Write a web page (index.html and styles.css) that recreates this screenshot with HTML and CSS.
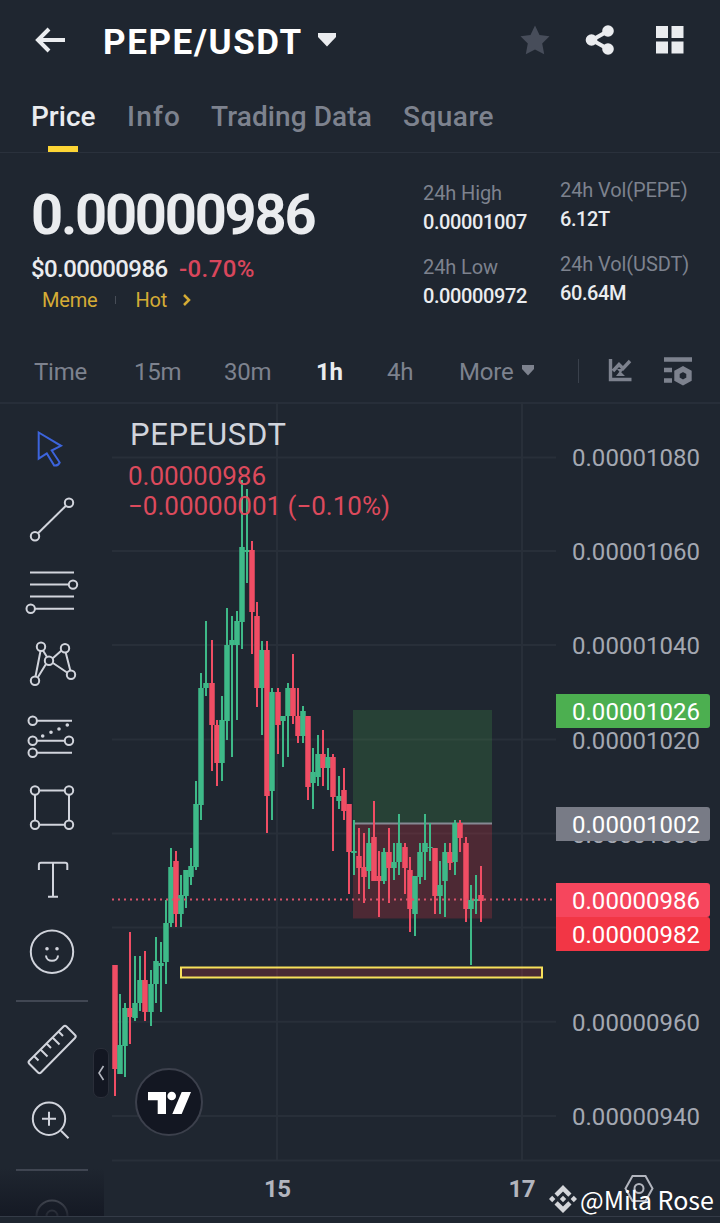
FILE: index.html
```html
<!DOCTYPE html>
<html lang="en">
<head>
  <meta charset="UTF-8" />
  <meta name="viewport" content="width=device-width, initial-scale=1.0"/>
  <title>PEPE/USDT</title>
  <link rel="stylesheet" href="styles.css">
</head>
<body>

  <header class="topbar">
    <svg class="back" width="32" height="28" viewBox="0 0 32 28"><path d="M31 14H4M15 3L4 14l11 11" /></svg>
    <h1>PEPE/USDT</h1>
    <svg class="caret" width="20" height="16" viewBox="0 0 20 16"><path d="M1 1h18v4l-9 9.500L1 5z" /></svg>
    <div class="actions">
      <svg width="32" height="34" viewBox="0 0 32 34"><path class="star" d="M16 2.500l4.500 9.500 10 1.200-7.300 7.300 2 10.800L16 26.500 6.800 31.300l2-10.800L1.500 13.200l10-1.200z" /></svg>
      <svg width="32" height="34" viewBox="0 0 32 34" class="share"><path d="M24 8L8 17l16 9" /><circle cx="24" cy="8" r="5.800" /><circle cx="7.500" cy="17" r="5.800" /><circle cx="24" cy="26" r="5.800" /></svg>
      <svg width="28" height="28" viewBox="0 0 28 28" class="apps"><path d="M0 0h12v12H0zM15.500 0h12v12h-12zM0 15.500h12v12H0zM15.500 15.500h12v12h-12z" /></svg>
    </div>
  </header>

  <nav class="tabs">
    <a class="tab active">Price</a>
    <a class="tab info">Info</a>
    <a class="tab data">Trading Data</a>
    <a class="tab square">Square</a>
  </nav>

  <section class="ticker">
    <div class="last">
      <div class="last-price">0.00000986</div>
      <div class="fiat"><span class="usd">$0.00000986</span><span class="change">-0.70%</span></div>
      <div class="tags">
        <span>Meme</span><i></i><span>Hot</span>
        <svg width="10" height="14" viewBox="0 0 10 14"><path d="M2 2l5 5-5 5" /></svg>
      </div>
    </div>
    <dl class="stats high-low">
      <dt>24h High</dt><dd>0.00001007</dd>
      <dt>24h Low</dt><dd>0.00000972</dd>
    </dl>
    <dl class="stats volume">
      <dt>24h Vol(PEPE)</dt><dd>6.12T</dd>
      <dt>24h Vol(USDT)</dt><dd>60.64M</dd>
    </dl>
  </section>

  <div class="intervals">
    <span class="i-time">Time</span>
    <span class="i-15">15m</span>
    <span class="i-30">30m</span>
    <span class="i-1 active">1h</span>
    <span class="i-4">4h</span>
    <span class="i-more">More</span>
    <svg class="more-caret" width="14" height="13" viewBox="0 0 14 13"><path d="M1 0h12v4l-6 6.500L1 4z" /></svg>
    <i class="divider"></i>
    <svg class="indicator" width="24" height="26" viewBox="0 0 24 26"><path class="line" d="M2.500 1v20.500H23.500M5 13l6-6.500 4 4 7-7.500" stroke-width="3.400" /><path class="fill" d="M8 18l4-5 5 5zM9 11h7l-3.500 4z" /></svg>
    <svg class="settings" width="30" height="30" viewBox="0 0 30 30"><path class="line" d="M1 3.500h28M1 14h8M1 24.500h8" stroke-width="4.500" /><path class="line" d="M20 13l6 3.400v6.700L20 26.500l-6-3.400v-6.700z" stroke-width="5.400" /></svg>
  </div>

  <main class="chart">
    <aside class="tools">
      <svg class="cursor" viewBox="0 0 72 72"><path d="M22.700 20.500L45 33.800l-9.300 4.700 8 12q-1.500 3.500-5.500 3l-7.400-12.100-8.100 5.300z" /></svg>
      <svg viewBox="0 0 72 72"><path d="M22 49.300L50 21.700" /><circle cx="19" cy="52.300" r="4.200" /><circle cx="53" cy="18.700" r="4.200" /></svg>
      <svg viewBox="0 0 72 72"><path d="M14 16.500h44M14 28.500h39M14 40.600h44M19 52.700h39" /><circle cx="57" cy="28.600" r="4.200" /><circle cx="14.700" cy="52.700" r="4.200" /></svg>
      <svg viewBox="0 0 72 72"><path d="M24.500 23l-5 25.500M27 22.500l4 6.500M30 36l-8 13M36.500 30.500l9-8M37 35l14 9.500M49.700 24.500l4.600 18" /><circle cx="25" cy="18.700" r="4.200" /><circle cx="49" cy="20.300" r="4.200" /><circle cx="33" cy="32.700" r="4.200" /><circle cx="55" cy="46.700" r="4.200" /><circle cx="19" cy="52.700" r="4.200" /></svg>
      <svg viewBox="0 0 72 72"><path d="M21 20.700h35M21 40.700h28M21 52.700h35" /><circle cx="16.700" cy="20.700" r="4.200" /><circle cx="16.700" cy="40.700" r="4.200" /><circle cx="53" cy="40.700" r="4.200" /><circle cx="16.700" cy="52.700" r="4.200" /><path class="dots" d="M26.700 36h.01M35 32.300h.01M43 29h.01M51.300 25h.01" /></svg>
      <svg viewBox="0 0 72 72"><path d="M23 18.500h26M23 52.700h26M19 23v25.500M53 23v25.500" /><circle cx="19" cy="18.500" r="4.200" /><circle cx="53" cy="18.500" r="4.200" /><circle cx="19" cy="52.700" r="4.200" /><circle cx="53" cy="52.700" r="4.200" /></svg>
      <svg viewBox="0 0 72 72"><path d="M22.900 26v-5.300q0-2 2-2h24.400q2 0 2 2V26M37 18.700V53M32 52.700h10" /></svg>
      <svg viewBox="0 0 72 72"><circle cx="36" cy="35.700" r="21.200" /><path d="M30 39.500c0 7 12 7 12 0" /><path class="dots" d="M31 32.700h.01M41 32.700h.01" /></svg>
      <hr>
      <svg viewBox="0 0 72 72"><path d="M47.500 13.500q1.500-1.500 3 0l8.500 8.500q1.500 1.500 0 3L25 59.500q-1.500 1.500-3 0l-8.700-8.700q-1.500-1.500 0-3zM18 43l4.500 4.500M24.500 36.500l7 7M30.500 30.500l4.500 4.500M36.500 24.500l7 7M42.500 18.500l4.500 4.500" /></svg>
      <svg viewBox="0 0 72 72"><circle cx="33" cy="33.700" r="16.200" /><path d="M26 33.700h14M33 26.700v14M45 45.700l7.500 7.500" /></svg>
      <hr>
      <svg class="faded" viewBox="0 0 72 72"><circle cx="36" cy="34" r="15.500" /><circle cx="36" cy="34" r="5.500" /></svg>
      <div class="fade"></div>
    </aside>

    <svg class="plot" width="616" height="814" viewBox="104 402 616 814">
      <path class="grid" d="M112 457.500h444M112 551h444M112 645h444M112 739.500h444M112 833.500h444M112 927.500h444M112 1021.700h444M112 1116h444M277 402v758M522 402v758M112 1160.500h608" />
      <rect x="353" y="710" width="139" height="113" fill="#4caf50" fill-opacity=".2" />
      <rect x="353" y="823" width="139" height="95.500" fill="#f23645" fill-opacity=".22" />
      <path d="M353 823.500h139" stroke="#868993" stroke-width="2" />
      <g id="candles"></g>
      <path class="price-line" d="M112 899.500h444" />
      <rect x="181" y="967.500" width="361" height="10" fill="#f23645" fill-opacity=".2" stroke="#f7e05a" stroke-width="2" />

      <text class="symbol" x="130" y="444.500" textLength="156">PEPEUSDT</text>
      <text class="quote" x="128" y="484.500" textLength="138">0.00000986</text>
      <text class="quote" x="128" y="514.500" textLength="262">−0.00000001 (−0.10%)</text>

      <g class="axis">
        <text x="572" y="466" textLength="128">0.00001080</text>
        <text x="572" y="560" textLength="128">0.00001060</text>
        <text x="572" y="654" textLength="128">0.00001040</text>
        <text x="572" y="749" textLength="128">0.00001020</text>
        <text x="572" y="842.500" textLength="128">0.00001000</text>
        <text x="572" y="1031" textLength="128">0.00000960</text>
        <text x="572" y="1125" textLength="128">0.00000940</text>
      </g>
      <g class="labels">
        <path fill="#4caf50" d="M556 694h151q3 0 3 3v28q0 3-3 3H556z" />
        <path fill="#787b86" d="M556 807h151q3 0 3 3v28q0 3-3 3H556z" />
        <path fill="#f6465d" d="M556 883h151q3 0 3 3v28q0 3-3 3H556z" />
        <path fill="#f23645" d="M556 917h151q3 0 3 3v28q0 3-3 3H556z" />
        <text x="572" y="720" textLength="128">0.00001026</text>
        <text x="572" y="833" textLength="128">0.00001002</text>
        <text x="572" y="909" textLength="128">0.00000986</text>
        <text x="572" y="943" textLength="128">0.00000982</text>
      </g>
      <g class="dates">
        <text x="264" y="1196.500" textLength="27">15</text>
        <text x="508.500" y="1196.500" textLength="27">17</text>
      </g>

      <circle cx="169" cy="1102" r="33" fill="#131722" stroke="#3c404c" stroke-width="2" />
      <path fill="#fff" d="M148 1092h18v22h-8.300v-13.700H148zM181.700 1092h9.300l-9.300 22h-9.400z" />
      <circle cx="171.700" cy="1096" r="4.300" fill="#fff" />
      <path class="hex" d="M632.500 1176h13l7 12.500-7 12.500h-13l-7-12.500z" />
      <circle class="hex" cx="639" cy="1188.500" r="4.500" />
    </svg>

    <button class="toggle"><svg width="8" height="16" viewBox="0 0 8 16"><path d="M6.500 1L2 8l4.500 7" /></svg></button>
  </main>

  <div class="watermark">
    <svg width="28" height="28" viewBox="0 0 28 28"><path d="M14 0l8.500 8.500-3.200 3.200L14 6.400l-5.300 5.300-3.200-3.200zM14 28l8.500-8.500-3.200-3.200-5.300 5.300-5.300-5.300-3.200 3.200zM3.200 10.800L6.400 14l-3.200 3.200L0 14zM24.800 10.800L28 14l-3.200 3.200-3.200-3.200zM14 10.800l3.200 3.200-3.200 3.200-3.200-3.200z" /></svg>
    <span>@Mila Rose</span>
  </div>

  <script src="script.js"></script>
</body>
</html>
```
FILE: styles.css
```css
:root {
  --bg: #1f2630;
  --line: #2a313c;
  --text: #eaecef;
  --muted: #7d828e;
  --yellow: #fcd535;
  --gold: #d5ac35;
  --green: #3eb988;
  --red: #f04d64;
}

* {
  box-sizing: border-box;
}

body {
  margin: 0;
  width: 720px;
  height: 1223px;
  overflow: hidden;
  background: var(--bg);
  color: var(--text);
  font-family: Roboto, "Liberation Sans", sans-serif;
}

svg {
  display: block;
  flex: none;
}

/* header */
.topbar {
  display: flex;
  align-items: center;
  height: 80px;
  padding: 0 36px 0 34px;
}

.back {
  fill: none;
  stroke: var(--text);
  stroke-width: 4;
}

.topbar h1 {
  margin: 4px 0 0 37px;
  width: 199px;
  font-size: 35px;
  font-weight: 700;
  letter-spacing: 1.6px;
  color: #fff;
}

.caret {
  margin-left: 15px;
  fill: var(--text);
}

.actions {
  display: flex;
  align-items: center;
  gap: 33px;
  margin-left: auto;
}

.star {
  fill: #474d5a;
}

.share,
.apps {
  fill: var(--text);
}

.share path {
  fill: none;
  stroke: var(--text);
  stroke-width: 4;
}

.apps {
  margin-left: 7px;
}

/* tabs */
.tabs {
  display: flex;
  height: 73px;
  padding-left: 31px;
  border-bottom: 1px solid var(--line);
  font-size: 28px;
  font-weight: 500;
  line-height: 73px;
  color: var(--muted);
}

.tab {
  position: relative;
  white-space: nowrap;
}

.tab.active {
  width: 96px;
  color: var(--text);
}

.tab.active::after {
  content: "";
  position: absolute;
  left: 17px;
  bottom: 0;
  width: 30px;
  height: 6px;
  background: var(--yellow);
}

.info {
  width: 84px;
  letter-spacing: 1.2px;
}

.data {
  width: 192px;
  letter-spacing: .1px;
}

.square {
  letter-spacing: .5px;
}

/* ticker */
.ticker {
  display: flex;
  height: 187px;
  padding: 24px 0 0 31px;
}

.last {
  width: 392px;
}

.last-price {
  height: 74px;
  line-height: 76px;
  font-size: 56px;
  font-weight: 700;
  letter-spacing: -2.2px;
}

.fiat {
  display: flex;
  height: 36px;
  line-height: 36px;
  font-size: 24px;
  font-weight: 500;
}

.usd {
  width: 148px;
  letter-spacing: -.6px;
}

.change {
  color: #d9465c;
  letter-spacing: .4px;
}

.tags {
  display: flex;
  align-items: center;
  padding-left: 11px;
  height: 26px;
  font-size: 20px;
  letter-spacing: -.2px;
  color: var(--gold);
}

.tags i {
  width: 1px;
  height: 8px;
  margin: 0 19px 0 18px;
  background: #474d57;
}

.tags svg {
  margin-left: 15px;
  fill: none;
  stroke: var(--gold);
  stroke-width: 2.5;
}

.stats {
  margin: 4px 0 0;
  font-size: 20px;
}

.stats dt {
  height: 25px;
  line-height: 25px;
  letter-spacing: -.1px;
  color: var(--muted);
}

.stats dd {
  margin: 0;
  height: 49px;
  line-height: 33px;
  font-weight: 500;
  letter-spacing: -.4px;
}

.high-low {
  width: 137px;
}

.volume {
  margin-top: 1px;
}

/* intervals */
.intervals {
  display: flex;
  align-items: center;
  height: 62px;
  padding-left: 34px;
  font-size: 24px;
  letter-spacing: -.2px;
  color: var(--muted);
}

.intervals span {
  padding-top: 1px;
}

.intervals .active {
  font-weight: 700;
  color: var(--text);
}

.i-time { width: 100px; }
.i-15 { width: 90px; }
.i-30 { width: 92px; }
.i-1 { width: 71px; }
.i-4 { width: 72px; }
.i-more { width: 62px; }

.more-caret,
.intervals .fill {
  fill: var(--muted);
}

.divider {
  width: 1px;
  height: 24px;
  margin: 0 29px 0 43px;
  background: #3a414c;
}

.intervals .line {
  fill: none;
  stroke: var(--muted);
}

.settings {
  margin-left: 31px;
}

/* chart */
.chart {
  position: relative;
  display: flex;
  height: 815px;
  border-bottom: 1px solid #343b47;
  box-shadow: inset 0 2px #272e39;
}

.tools {
  position: relative;
  width: 104px;
  height: 814px;
  padding: 10px 16px 0;
  overflow: hidden;
}

.tools svg {
  width: 72px;
  height: 72px;
  fill: none;
  stroke: #d1d4dc;
  stroke-width: 2;
}

.tools .cursor {
  stroke: #3c64dc;
}

.tools .dots {
  stroke-width: 3.6;
  stroke-linecap: round;
}

.tools hr {
  height: 2px;
  margin: 12px 0 11px;
  border: 0;
  background: #414753;
}

.tools .faded {
  opacity: .5;
}

.fade {
  position: absolute;
  left: 0;
  bottom: 0;
  width: 104px;
  height: 48px;
  background: linear-gradient(rgba(19, 23, 34, 0), rgba(19, 23, 34, .85));
}

.grid {
  fill: none;
  stroke: #282f39;
  stroke-width: 2;
}

.up { fill: var(--green); }
.down { fill: var(--red); }

.price-line {
  stroke: #d9526a;
  stroke-width: 2;
  stroke-dasharray: 2 4;
}

.symbol {
  font-size: 31px;
  fill: #d1d4dc;
}

.quote {
  font-size: 26px;
  fill: #dc4a5c;
}

.axis {
  font-size: 24px;
  fill: #a4a8b2;
}

.labels {
  font-size: 24px;
  fill: #fff;
}

.dates {
  font-size: 24px;
  font-weight: 700;
  fill: #b2b5be;
}

.hex {
  fill: none;
  stroke: #b2b5be;
  stroke-width: 2;
}

.toggle {
  position: absolute;
  left: 93px;
  top: 646px;
  width: 16px;
  height: 50px;
  padding: 0 0 0 3px;
  border: 1px solid #2a2e39;
  border-radius: 7px;
  background: #131722;
}

.toggle path {
  fill: none;
  stroke: #b2b5be;
  stroke-width: 1.6;
}

.watermark {
  position: absolute;
  left: 549px;
  top: 1182px;
  display: flex;
  align-items: center;
  gap: 3px;
  font-family: "Noto Sans CJK SC", "Noto Sans", sans-serif;
  font-size: 25px;
  line-height: 34px;
  color: #fff;
  white-space: nowrap;
}

.watermark svg {
  fill: #d3d5d9;
}
```
FILE: script.js
```js
// [direction, body top, body bottom, wick top, wick bottom]
const candles = [
  ["down", 965, 1069, 965, 1096], ["up", 1045, 1074, 994, 1074], ["up", 1008, 1046, 1003, 1077],
  ["down", 1008, 1017, 932, 1044], ["up", 1003, 1018, 956, 1021], ["up", 980, 1003, 956, 1011],
  ["down", 980, 1012, 951, 1021], ["up", 984, 1012, 970, 1026], ["up", 961, 984, 937, 1003],
  ["up", 963, 966, 942, 1012], ["up", 923, 962, 900, 984], ["up", 867, 923, 848, 927],
  ["down", 861, 914, 851, 927], ["up", 895, 914, 875, 927], ["up", 870, 896, 870, 908],
  ["up", 866, 877, 848, 885], ["up", 804, 867, 781, 870], ["up", 688, 805, 673, 820],
  ["up", 683, 688, 621, 696], ["down", 683, 725, 640, 771], ["down", 725, 763, 720, 786],
  ["up", 720, 763, 696, 781], ["up", 645, 721, 608, 740], ["up", 640, 645, 616, 757],
  ["up", 621, 645, 611, 720], ["up", 547, 622, 480, 649], ["up", 550, 552, 489, 583],
  ["down", 550, 612, 541, 654], ["down", 616, 688, 602, 707], ["up", 650, 688, 641, 735],
  ["down", 650, 796, 641, 833], ["up", 692, 791, 688, 820], ["down", 692, 725, 688, 754],
  ["up", 716, 721, 716, 767], ["up", 688, 716, 683, 757], ["down", 688, 716, 654, 724],
  ["down", 716, 736, 688, 743], ["up", 711, 736, 706, 743], ["down", 716, 787, 716, 800],
  ["up", 772, 783, 748, 809], ["up", 754, 777, 735, 786], ["down", 754, 768, 730, 786],
  ["up", 757, 768, 748, 790], ["down", 757, 797, 754, 851], ["up", 796, 801, 776, 809],
  ["down", 790, 811, 768, 820], ["down", 804, 852, 804, 894], ["up", 851, 853, 820, 875],
  ["down", 856, 868, 828, 894], ["down", 867, 877, 833, 903], ["up", 843, 871, 828, 889],
  ["down", 837, 881, 801, 881], ["down", 876, 881, 851, 917], ["up", 852, 881, 848, 884],
  ["down", 852, 868, 828, 903], ["up", 862, 868, 843, 880], ["up", 843, 862, 814, 875],
  ["down", 847, 868, 843, 894], ["down", 870, 909, 857, 932], ["up", 876, 914, 876, 936],
  ["up", 852, 877, 843, 884], ["up", 843, 852, 814, 880], ["up", 847, 848, 823, 861],
  ["down", 848, 896, 848, 914], ["up", 885, 896, 861, 914], ["up", 852, 881, 843, 917],
  ["down", 852, 863, 843, 870], ["up", 823, 862, 820, 875], ["down", 823, 838, 820, 852],
  ["down", 843, 909, 837, 922], ["up", 900, 909, 885, 965], ["up", 899, 901, 875, 914],
  ["down", 895, 901, 866, 922]
];

const group = document.getElementById("candles");

function addRect(cls, x, y, width, height) {
  const rect = document.createElementNS("http://www.w3.org/2000/svg", "rect");
  rect.setAttribute("class", cls);
  rect.setAttribute("x", x);
  rect.setAttribute("y", y);
  rect.setAttribute("width", width);
  rect.setAttribute("height", height);
  group.appendChild(rect);
}

candles.forEach(([cls, top, bottom, high, low], i) => {
  const x = Math.round(115 + i * 5.08);
  addRect(cls, x - 1, high, 2, low - high);
  addRect(cls, x - 2.75, top, 5.5, bottom - top);
});
```
